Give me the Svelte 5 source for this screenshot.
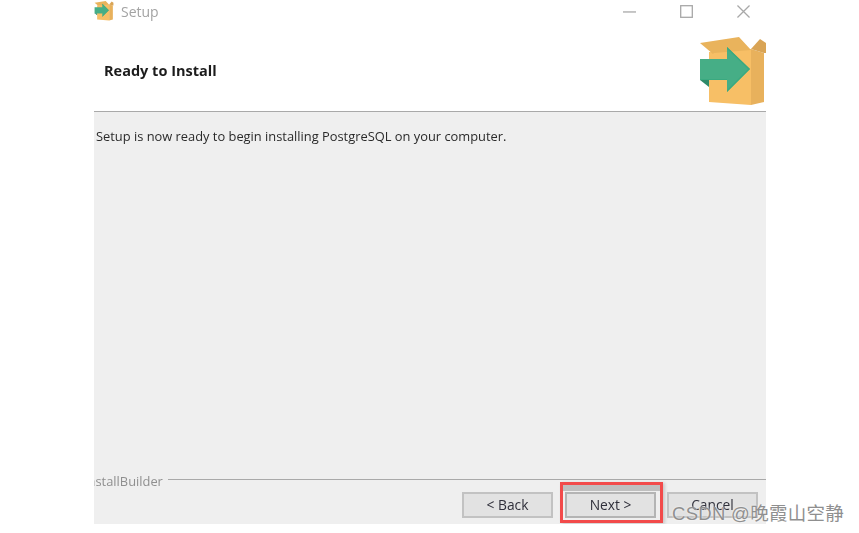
<script>
  const buttons = ['< Back', 'Next >', 'Cancel'];
</script>

<div class="page">
  <div class="window">
    <div class="titlebar">
      <div class="title">
        <svg class="app-icon" viewBox="0 0 66 70" width="20" height="20" aria-hidden="true">
          <use href="#box" />
        </svg>
        <span>Setup</span>
      </div>
      <div class="controls">
        <svg class="ctl" viewBox="0 0 14 14"><path d="M0 7.5H14" /></svg>
        <svg class="ctl" viewBox="0 0 14 14"><rect x="0.75" y="0.75" width="12.5" height="12.5" /></svg>
        <svg class="ctl" viewBox="0 0 14 14"><path d="M0.5 0.5L13.5 13.5M13.5 0.5L0.5 13.5" /></svg>
      </div>
    </div>

    <header class="head">
      <h1>Ready to Install</h1>
      <svg class="logo" viewBox="0 0 66 70" width="66" height="70" aria-hidden="true">
        <defs>
          <g id="box">
            <path d="M9 15L51 12V68L9 65Z" fill="#f7bf66" />
            <path d="M0 6L39 0L51 13L14 16L13 17Z" fill="#e9b35c" />
            <path d="M51 12L64 16V65L51 68Z" fill="#e8b15c" />
            <path d="M51 12L60 2L66 6V16L64 16Z" fill="#d9a455" />
            <path d="M0 22H27V10L50 32L27 55V43H0Z" fill="#46ae86" />
            <path d="M0 43H9V50Z" fill="#2f8a69" />
            <path d="M27 10L50 32L27 55V53L48 32L27 12ZM0 42H27V43H0Z" fill="#3aa980" />
          </g>
        </defs>
        <use href="#box" />
      </svg>
    </header>

    <main class="body">
      <p class="message">Setup is now ready to begin installing PostgreSQL on your computer.</p>
      <div class="brand">
        <span class="brand-name">InstallBuilder</span>
        <span class="rule"></span>
      </div>
      <div class="actions">
        {#each buttons as label, i}
          <button class:focused={i === 1}>{label}</button>
        {/each}
      </div>
    </main>
  </div>
  <div class="watermark">CSDN @晚霞山空静</div>
</div>

<style>
  :global(body) {
    margin: 0;
    background: #fff;
  }
  .page {
    position: relative;
    width: 859px;
    height: 533px;
    overflow: hidden;
    background: #fff;
    font-family: "Open Sans", "Noto Sans", sans-serif;
  }
  .window {
    display: flex;
    flex-direction: column;
    width: 672px;
    height: 524px;
    margin-left: 94px;
    overflow: hidden;
    background: #fff;
    filter: blur(0.35px);
  }
  .titlebar {
    display: flex;
    justify-content: space-between;
    height: 26px;
    flex: none;
  }
  .title {
    display: flex;
    align-items: center;
    gap: 7px;
    margin-top: -5px;
    color: #a3a3a3;
    font-size: 14px;
  }
  .title span {
    margin-top: 1px;
  }
  .controls {
    display: flex;
    gap: 44px;
    align-items: center;
    padding-right: 16px;
    margin-top: -4px;
  }
  .ctl {
    width: 13px;
    height: 13px;
    fill: none;
    stroke: #a8a8a8;
    stroke-width: 1.4;
  }
  .head {
    display: flex;
    justify-content: space-between;
    height: 86px;
    flex: none;
    box-sizing: border-box;
    border-bottom: 1px solid #a9a9a9;
    box-shadow: 0 1px 0 #e4e4e4;
  }
  h1 {
    margin: 35px 0 0 10px;
    font-size: 14.5px;
    line-height: 20px;
    font-weight: 700;
    color: #1c1c1c;
  }
  .logo {
    margin-top: 11px;
    width: 66px;
    height: 70px;
    flex: none;
  }
  .body {
    flex: 1;
    display: flex;
    flex-direction: column;
    background: #efefef;
  }
  .message {
    margin: 15px 0 0 2px;
    font-size: 12.87px;
    line-height: 18px;
    color: #2a2a2a;
    flex: 1;
  }
  .brand {
    display: flex;
    align-items: center;
    gap: 5px;
    height: 20px;
    margin: 0 0 3px -10px;
    color: #8f8f8f;
    font-size: 12.87px;
  }
  .brand-name {
    margin-top: 3px;
  }
  .rule {
    flex: 1;
    height: 1px;
    background: #a9a9a9;
  }
  .actions {
    display: flex;
    justify-content: flex-end;
    gap: 11px;
    padding: 0 8px 6px 0;
    height: 26px;
  }
  button {
    width: 91px;
    height: 26px;
    padding: 0 0 1px;
    box-sizing: border-box;
    border: 2px solid #c2c2c2;
    background: #e2e2e2;
    color: #2f2f3a;
    font: inherit;
    font-size: 13.8px;
  }
  button:first-child {
    margin-right: 1px;
  }
  .focused {
    position: relative;
    border-color: #b4b4b4;
  }
  .focused::after {
    content: "";
    position: absolute;
    inset: -12px -9px -7px -7px;
    border: 3px solid #f24a4a;
    background: linear-gradient(#bfbfbf 0 6px, transparent 6px);
    box-shadow: 2px 1px 3px #c8c8c8;
  }
  .watermark {
    position: absolute;
    left: 672px;
    top: 503px;
    color: #8f8f8f;
    font-size: 18.5px;
    line-height: 22px;
    letter-spacing: 0.3px;
    font-family: "Liberation Sans", "Noto Sans CJK SC", sans-serif;
    text-shadow: 0 0 2px #fff;
  }
</style>
